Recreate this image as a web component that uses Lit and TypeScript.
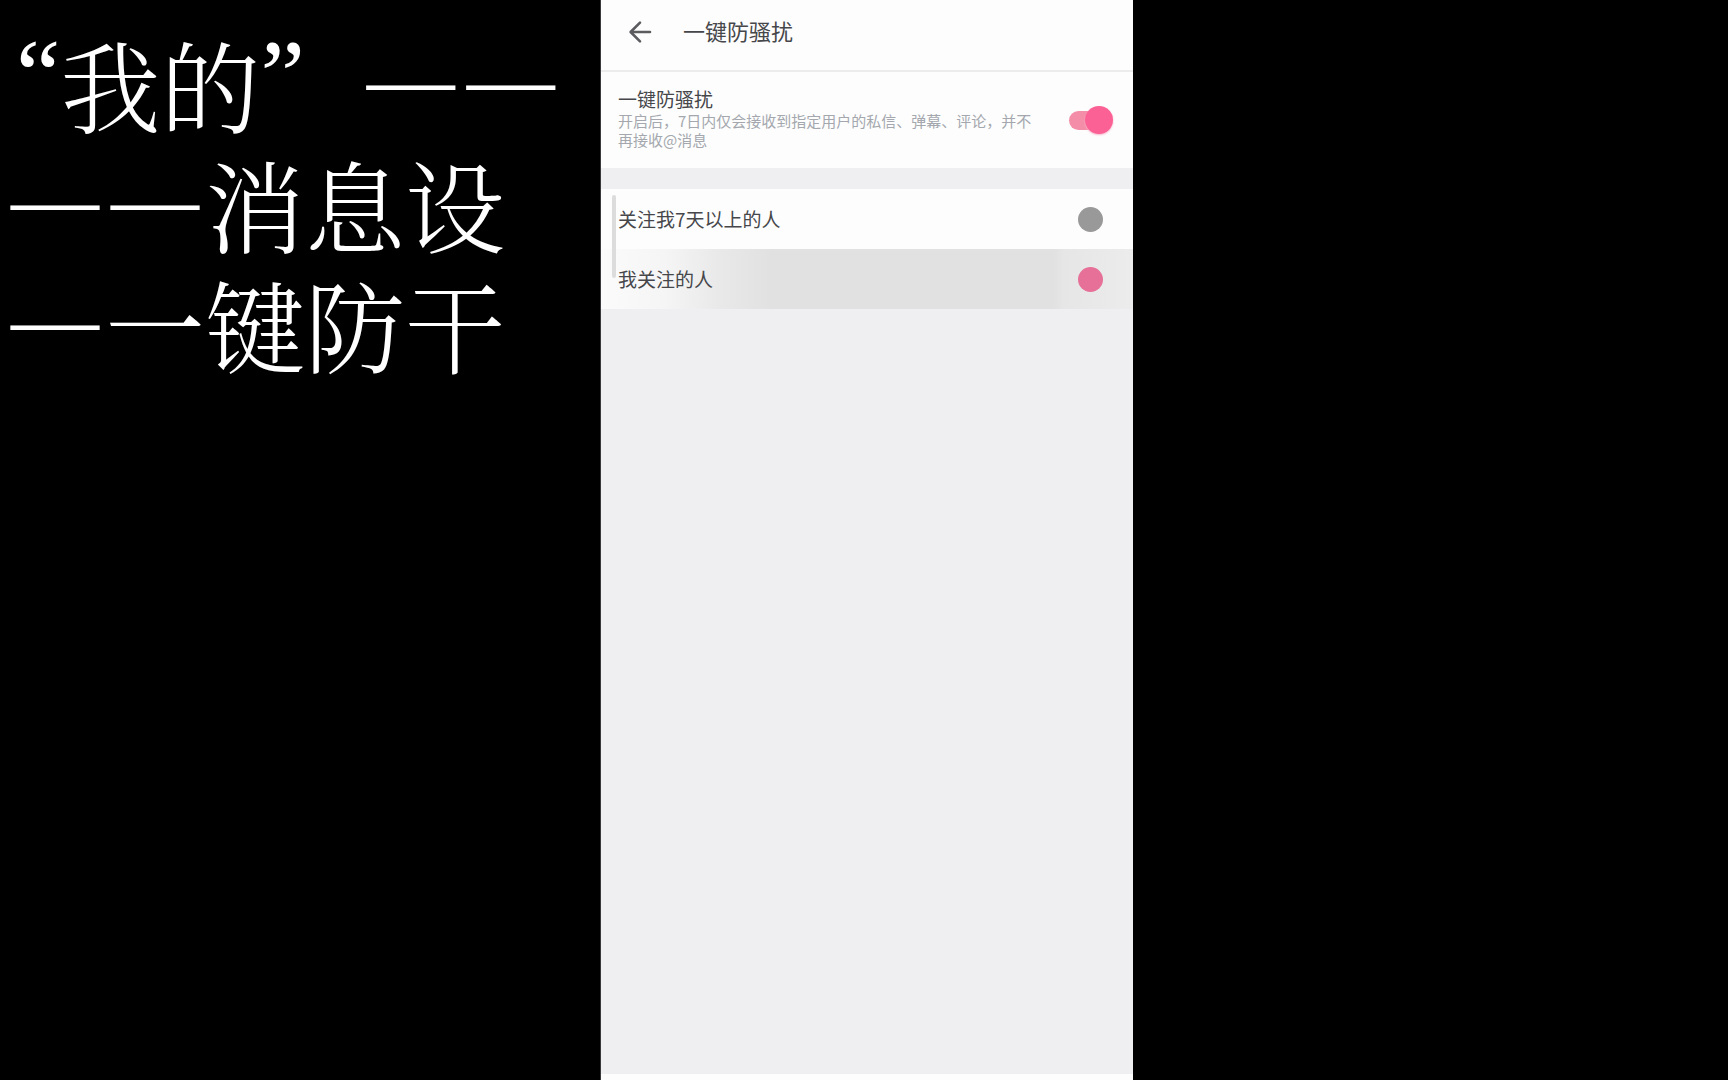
import { LitElement, html, css } from "lit";
import { customElement, state } from "lit/decorators.js";

@customElement("app-root")
export class AppRoot extends LitElement {
  @state() private enabled = true;
  @state() private audience = [
    { id: "fans", label: "关注我7天以上的人", checked: false, pressed: false },
    { id: "following", label: "我关注的人", checked: true, pressed: true },
  ];

  static styles = css`
    :host {
      display: block;
      background: #000;
    }
    * {
      box-sizing: border-box;
    }
    .stage {
      display: grid;
      grid-template-columns: 600fr 533fr 595fr;
      min-height: 100vh;
      overflow: hidden;
    }
    .caption {
      min-width: 0;
      margin: 0;
      padding: 33px 0 0 5px;
      color: #fff;
      font: 300 100px/120px "Liberation Serif", "Noto Serif CJK SC",
        "Noto Sans CJK SC", serif;
      white-space: pre;
    }
    .line {
      display: block;
    }
    .lead {
      padding-left: 11px;
    }
    .quote {
      line-height: 80px;
      vertical-align: 18px;
    }
    .close {
      padding-right: 56px;
    }
    .dash {
      display: inline-block;
      width: 100px;
      font-size: 88px;
      line-height: 88px;
      text-align: center;
      vertical-align: 17px;
    }
    .phone {
      position: relative;
      display: flex;
      flex-direction: column;
      min-width: 0;
      background: linear-gradient(#fdfdfe, #fdfdfe) bottom / 100% 6px no-repeat
        #efeff1;
      border-left: 1px solid #39393b;
      color: #46474b;
      font: 400 19px/24px "Noto Sans CJK SC", sans-serif;
    }
    .bar {
      display: flex;
      align-items: center;
      gap: 30px;
      height: 72px;
      padding: 0 26px 8px;
      background: #fdfdfd;
      border-bottom: 2px solid #ececec;
    }
    .back {
      display: flex;
      padding: 2px 0 0;
      border: 0;
      background: none;
      color: #5b5b60;
    }
    .title {
      margin: 0;
      padding-bottom: 2px;
      font-size: 22px;
      line-height: 30px;
      font-weight: 400;
    }
    .master {
      display: flex;
      align-items: center;
      gap: 28px;
      height: 96px;
      padding: 0 20px 0 17px;
      background: #fdfdfd;
    }
    .copy {
      flex: 1;
      min-width: 0;
      padding-bottom: 4px;
    }
    .name {
      display: block;
    }
    .hint {
      margin: 0;
      color: #a4a8ae;
      font-size: 15px;
      line-height: 19px;
    }
    .switch {
      appearance: none;
      position: relative;
      display: flex;
      align-items: center;
      flex: none;
      width: 44px;
      height: 28px;
      margin: 0;
    }
    .switch::before {
      content: "";
      position: absolute;
      inset: 5px 8px 4px 0;
      border-radius: 10px;
      background: #f48da7;
    }
    .switch::after {
      content: "";
      position: relative;
      width: 28px;
      height: 28px;
      border-radius: 50%;
      background: #fb6195;
      box-shadow: 0 1px 2px #f9b5cb;
    }
    .switch:checked {
      justify-content: flex-end;
    }
    .list {
      margin: 21px 0 0;
      padding: 0;
      list-style: none;
      background: #fdfdfd;
    }
    .row {
      display: flex;
      align-items: center;
      justify-content: space-between;
      height: 60px;
      padding: 0 30px 0 17px;
    }
    .row.pressed {
      background: linear-gradient(
        90deg,
        #fbfbfb 0,
        #f5f5f5 12%,
        #e9e9e9 22%,
        #e1e1e1 32%,
        #e1e1e1 85%,
        #e6e6e6 87%,
        #ececec 100%
      );
    }
    .dot {
      appearance: none;
      width: 25px;
      height: 25px;
      margin: 0;
      border-radius: 50%;
      background: #999;
    }
    .dot:checked {
      background: #e67098;
    }
    .scroll {
      position: absolute;
      left: 11px;
      top: 195px;
      width: 4px;
      height: 83px;
      border-radius: 2px;
      background: #dcdcdc;
    }
  `;

  private toggle(id: string) {
    this.audience = this.audience.map((a) =>
      a.id === id ? { ...a, checked: !a.checked } : a
    );
  }

  render() {
    const dash = html`<span class="dash">—</span>`;
    return html`
      <main class="stage">
        <p class="caption"><span class="line lead"><span class="quote">“</span>我的<span class="quote close">”</span>${dash}${dash}</span><span class="line">${dash}${dash}消息设</span><span class="line">${dash}一键防干</span></p>
        <section class="phone">
          <header class="bar">
            <button class="back" type="button" aria-label="返回">
              <svg width="26" height="26" viewBox="0 0 26 26" fill="none" stroke="currentColor" stroke-width="2.6" stroke-linecap="round" stroke-linejoin="round">
                <path d="M23 13H4M13 3.6 3.6 13l9.4 9.4" />
              </svg>
            </button>
            <h1 class="title">一键防骚扰</h1>
          </header>
          <div class="master">
            <div class="copy">
              <label class="name" for="master">一键防骚扰</label>
              <p class="hint" id="hint">开启后，7日内仅会接收到指定用户的私信、弹幕、评论，并不再接收@消息</p>
            </div>
            <input
              class="switch"
              id="master"
              type="checkbox"
              role="switch"
              aria-describedby="hint"
              .checked=${this.enabled}
              @change=${() => (this.enabled = !this.enabled)}
            />
          </div>
          <ul class="list">
            ${this.audience.map(
              (a) => html`<li class="row ${a.pressed ? "pressed" : ""}">
                <label for=${a.id}>${a.label}</label>
                <input
                  class="dot"
                  id=${a.id}
                  type="checkbox"
                  .checked=${a.checked}
                  @change=${() => this.toggle(a.id)}
                />
              </li>`
            )}
          </ul>
          <div class="scroll"></div>
        </section>
      </main>
    `;
  }
}
